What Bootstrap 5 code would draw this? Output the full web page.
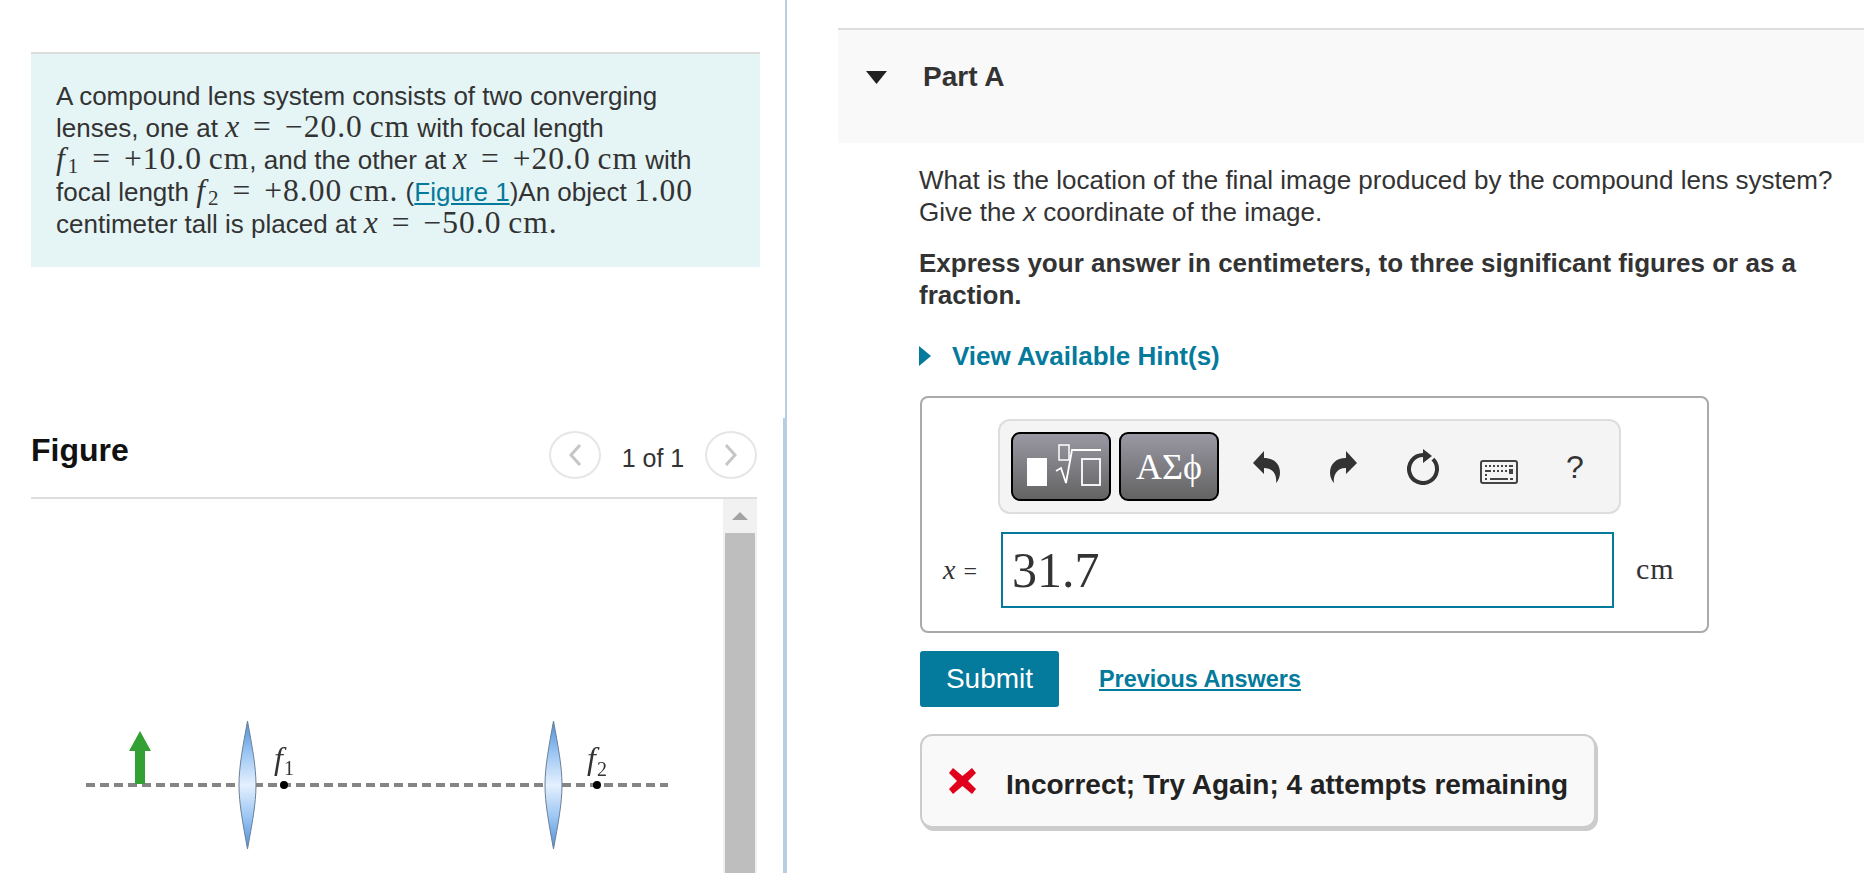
<!DOCTYPE html>
<html lang="en">
<head>
<meta charset="utf-8">
<title>Compound lens system</title>
<link href="https://cdn.jsdelivr.net/npm/bootstrap@5.3.0/dist/css/bootstrap.min.css" rel="stylesheet">
<style>
html,body{height:873px;overflow:hidden}
body{font-family:"Liberation Sans",Arial,sans-serif;font-size:26px;line-height:32px;color:#333;background:#fff}
.shell{height:873px}
.pane-left{width:783px;flex:none;padding:52px 26px 0 31px}
.problem-box{background:#e5f5f6;border-top:2px solid #ddd;height:215px;width:729px;padding:26px 25px 0}
.mth{font-family:"Liberation Serif",serif;font-size:31.5px;line-height:0;word-spacing:-2px;letter-spacing:1px}
.mth sub{font-size:21px;line-height:0;bottom:-.2em;margin-left:2px}
.eqs{margin:0 13px}
.tlink{color:#047a9c;text-decoration:underline}
.fig-head{width:726px;padding-top:164px;height:66px;box-sizing:content-box;border-bottom:2px solid #ddd}
.fig-title{font-size:32px;font-weight:700;color:#111;line-height:36px;margin-top:1px}
.circ{width:52px;height:48px;border:2px solid #e6e6e6;border-radius:50%;background:#fff;padding:0}
.pager{font-size:25px;width:104px;text-align:center;margin-top:6px}
.fig-body{width:726px;height:375px}
.sbar{width:34px;background:#f1f1f1;padding:0 2px}
.sbar-up{height:34px}
.sbar-thumb{background:#bebebe}
.rule-wrap{width:4px;flex:none}
.rule-top{width:2px;height:418px;margin-left:2px;background:#b9cde0}
.rule-low{flex:1;background:#b9cde0}
.pane-right{flex:1;padding-top:28px;margin-left:51px;min-width:0}
.part-head{background:#f9f9f9;border-top:2px solid #ddd;height:115px;padding:31px 0 0 28px}
.part-name{font-size:28px;font-weight:700;margin-left:36px;line-height:32px}
.part-main{padding:21px 0 0 81px}
.qtext{margin:0;white-space:nowrap}
.qbold{margin:19px 0 0;white-space:nowrap;font-weight:700}
.hint-row{margin-top:29px;color:#047a9c;font-weight:700}
.hint-row span{margin-left:21px}
.ans-box{width:789px;height:237px;margin:24px 0 0 1px;border:2px solid #aaa;border-radius:8px;padding:21px 0 0 76px}
.tool-bar{width:623px;height:95px;background:#f4f4f4;border:2px solid #ddd;border-radius:12px;padding:11px 0 0 11px}
.mq-btn{width:100px;height:69px;padding:0;border:2px solid #000;border-radius:9px;background:linear-gradient(#9a98a3,#636363);color:#fff;font-family:"Liberation Serif",serif;font-size:36px;line-height:1}
.mq-btn + .mq-btn{margin-left:8px}
.tool-ic{color:#333;font-size:32px;line-height:1;margin-top:12px}
.ans-row{margin:18px 0 0 -55px}
.ans-lbl{width:58px;font-family:"Liberation Serif",serif;font-size:24px;word-spacing:2px}
.ans-lbl i{font-size:28px}
.ans-in{width:613px;height:76px;border:2px solid #047a9c;font-family:"Liberation Serif",serif;font-size:50px;line-height:1;padding:0 0 0 9px;color:#333;display:flex;align-items:center}
.ans-unit{font-family:"Liberation Serif",serif;font-size:30px;margin-left:22px;padding-bottom:2px;letter-spacing:1px}
.act-row{margin:18px 0 0 1px}
.btn-go{background:#047a9c;color:#fff;border:0;border-radius:3px;width:139px;height:56px;padding:0;font-size:28px}
.btn-go:hover{background:#047a9c;color:#fff}
.prev-link{font-weight:700;font-size:23.4px;margin-left:40px;color:#047a9c}
.fb-box{width:676px;height:94px;margin:27px 0 0 1px;border:2px solid #ccc;border-radius:12px;background:#f9f9f9;box-shadow:2px 3px 0 #ccc;padding-left:27px;font-weight:700;font-size:28px;color:#222}
.fb-box span{margin-left:30px;padding-top:7px}
.diagram{filter:blur(.5px)}
.ic-undo{margin:7px 0 0 34px}
.ic-redo{margin:7px 0 0 50px}
.ic-reload{margin:5px 0 0 50px}
.ic-keys{margin:16px 0 0 41px}
.ic-help{margin:7px 0 0 48px}
.mark-tri{margin-top:10px}
</style>
</head>
<body>
<div class="shell d-flex">
  <div class="pane-left">
    <div class="problem-box">
      A compound lens system consists of two converging<br>
      lenses, one at <span class="mth"><i>x</i><span class="eqs">=</span>−20.0 cm</span> with focal length<br>
      <span class="mth"><i>f</i><sub>1</sub><span class="eqs">=</span>+10.0 cm</span>, and the other at <span class="mth"><i>x</i><span class="eqs">=</span>+20.0 cm</span> with<br>
      focal length <span class="mth"><i>f</i><sub>2</sub><span class="eqs">=</span>+8.00 cm.</span> (<a class="tlink" href="#">Figure 1</a>)An object <span class="mth">1.00</span><br>
      centimeter tall is placed at <span class="mth"><i>x</i><span class="eqs">=</span>−50.0 cm.</span>
    </div>
    <div class="fig-head d-flex justify-content-between align-items-start">
      <div class="fig-title">Figure</div>
      <div class="d-flex align-items-center">
        <button class="circ btn d-flex align-items-center justify-content-center" aria-label="Previous"><svg width="14" height="22" viewBox="0 0 14 22"><path d="M12 1 3 11l9 10" fill="none" stroke="#c6c6c6" stroke-width="3"/></svg></button>
        <div class="pager">1 of 1</div>
        <button class="circ btn d-flex align-items-center justify-content-center" aria-label="Next"><svg width="14" height="22" viewBox="0 0 14 22"><path d="M2 1l9 10-9 10" fill="none" stroke="#c6c6c6" stroke-width="3"/></svg></button>
      </div>
    </div>
    <div class="fig-body d-flex">
      <div class="flex-grow-1">
        <svg class="d-block diagram" width="692" height="375" viewBox="31 498 692 375">
          <defs>
            <linearGradient id="lg" x1="0" y1="0" x2="0" y2="1">
              <stop offset="0" stop-color="#4d8fd8"/><stop offset=".25" stop-color="#9cc6f4"/><stop offset=".5" stop-color="#e4f0fe"/><stop offset=".75" stop-color="#9cc6f4"/><stop offset="1" stop-color="#4d8fd8"/>
            </linearGradient>
          </defs>
          <line x1="86" y1="784" x2="668" y2="784" stroke="#858585" stroke-width="4" stroke-dasharray="9 5"/>
          <path d="M135 783V750h-6l11-20 11 20h-6v33z" fill="#33a033"/>
          <path d="M247.500 720C252 745 256 765 256 784S252 823 247.500 848C243 823 239 803 239 784S243 745 247.500 720Z" fill="url(#lg)" stroke="#6b7f95" stroke-width="1"/>
          <path d="M553.500 720C558 745 562 765 562 784S558 823 553.500 848C549 823 545 803 545 784S549 745 553.500 720Z" fill="url(#lg)" stroke="#6b7f95" stroke-width="1"/>
          <circle cx="284" cy="784" r="4" fill="#000"/>
          <circle cx="597" cy="784" r="4" fill="#000"/>
          <text x="274" y="768" font-family="Liberation Serif" font-style="italic" font-size="32" fill="#333">f</text>
          <text x="284" y="774" font-family="Liberation Serif" font-size="20" fill="#333">1</text>
          <text x="587" y="768" font-family="Liberation Serif" font-style="italic" font-size="32" fill="#333">f</text>
          <text x="597" y="775" font-family="Liberation Serif" font-size="20" fill="#333">2</text>
        </svg>
      </div>
      <div class="sbar d-flex flex-column">
        <div class="sbar-up d-flex align-items-center justify-content-center"><svg width="16" height="8" viewBox="0 0 16 8"><path d="M8 0l8 8H0z" fill="#a3a3a3"/></svg></div>
        <div class="sbar-thumb flex-grow-1"></div>
      </div>
    </div>
  </div>
  <div class="rule-wrap d-flex flex-column">
    <div class="rule-top"></div>
    <div class="rule-low"></div>
  </div>
  <div class="pane-right">
    <div class="part-head d-flex align-items-start">
      <svg class="mark-tri" width="21" height="13" viewBox="0 0 21 13"><path d="M0 0h21L10.500 13z" fill="#222"/></svg>
      <div class="part-name">Part A</div>
    </div>
    <div class="part-main">
      <p class="qtext">What is the location of the final image produced by the compound lens system?<br>Give the <i>x</i> coordinate of the image.</p>
      <p class="qbold">Express your answer in centimeters, to three significant figures or as a<br>fraction.</p>
      <div class="hint-row d-flex align-items-center">
        <svg width="12" height="20" viewBox="0 0 12 20"><path d="M0 0l12 10L0 20z" fill="#047a9c"/></svg>
        <span>View Available Hint(s)</span>
      </div>
      <div class="ans-box">
        <div class="tool-bar d-flex align-items-start">
          <button class="mq-btn btn d-flex align-items-center justify-content-center" aria-label="Templates">
            <svg width="96" height="65" viewBox="1014 434 96 65"><rect x="1028" y="458" width="20" height="28" fill="#fff"/><rect x="1060" y="445" width="10" height="15" fill="none" stroke="#fff" stroke-width="1.500"/><path d="M1057 471l5-3 5 15 6-33h29" fill="none" stroke="#fff" stroke-width="1.800"/><rect x="1083" y="459" width="18" height="26" fill="none" stroke="#fff" stroke-width="1.800"/></svg>
          </button>
          <button class="mq-btn btn d-flex align-items-center justify-content-center">ΑΣϕ</button>
          <div class="d-flex align-items-start tool-ic">
            <svg class="ic-undo" width="27" height="32" viewBox="0 0 27 32"><path d="M0 12 11 0v7c10 0 16 6 16 15 0 4-2 8-4 10 1-7-2-15-12-15v6z" fill="#333"/></svg>
            <svg class="ic-redo" width="27" height="32" viewBox="0 0 27 32"><path d="M27 12 16 0v7C6 7 0 13 0 22c0 4 2 8 4 10-1-7 2-15 12-15v6z" fill="#333"/></svg>
            <svg class="ic-reload" width="32" height="36" viewBox="0 0 32 36"><path d="M25.900 10.100A14 14 0 1 1 16 6" fill="none" stroke="#333" stroke-width="4"/><path d="M16 0l9 7-9 7z" fill="#333"/></svg>
            <svg class="ic-keys" width="38" height="24" viewBox="0 0 38 24"><rect x="1" y="1" width="36" height="22" rx="2" fill="#f4f4f4" stroke="#444" stroke-width="2"/><path d="M5 5h2v2H5zM9 5h2v2H9zM13 5h2v2h-2zM17 5h2v2h-2zM21 5h2v2h-2zM25 5h2v2h-2zM29 5h4v2h-4zM5 10h6v2H5zM13 10h2v2h-2zM17 10h2v2h-2zM21 10h2v2h-2zM25 10h2v2h-2zM29 9h4v5h-4zM5 14h2v2H5zM5 18h2v2H5zM10 18h18v2H10zM30 18h3v2h-3z" fill="#444"/></svg>
            <span class="ic-help">?</span>
          </div>
        </div>
        <div class="ans-row d-flex align-items-center">
          <div class="ans-lbl"><i>x</i> =</div>
          <div class="ans-in">31.7</div>
          <div class="ans-unit">cm</div>
        </div>
      </div>
      <div class="act-row d-flex align-items-center">
        <button class="btn btn-go">Submit</button>
        <a class="prev-link tlink" href="#">Previous Answers</a>
      </div>
      <div class="fb-box d-flex align-items-center">
        <svg width="27" height="26" viewBox="0 0 27 26"><path d="M4 0l9.500 8L23 0l4 5-8 8 8 8-4 5-9.500-8L4 26l-4-5 8-8-8-8z" fill="#e0001b"/></svg>
        <span>Incorrect; Try Again; 4 attempts remaining</span>
      </div>
    </div>
  </div>
</div>
<script src="https://cdn.jsdelivr.net/npm/bootstrap@5.3.0/dist/js/bootstrap.bundle.min.js"></script>
</body>
</html>
